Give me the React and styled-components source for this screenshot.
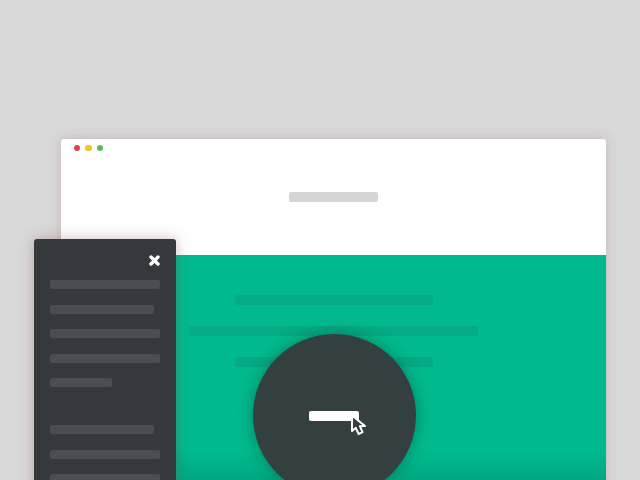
import React from 'react';
import styled, { createGlobalStyle } from 'styled-components';

const GlobalStyle = createGlobalStyle`
  html, body {
    margin: 0;
    padding: 0;
    height: 100%;
    overflow: hidden;
    background: #d9d9d9;
  }
`;

const Page = styled.div`
  position: relative;
  width: 640px;
  height: 480px;
  overflow: hidden;
  padding: 139px 34px 0 61px;
  box-sizing: border-box;
  background: #d9d9d9;
`;

const Window = styled.div`
  position: relative;
  height: 380px;
  border-radius: 3px 3px 0 0;
  background: #fff;
  box-shadow: 0 0 12px rgba(150, 90, 90, 0.28);
`;

const TitleBar = styled.div`
  height: 116px;
  position: relative;
  display: flex;
  align-items: center;
  justify-content: center;
`;

const Dots = styled.div`
  position: absolute;
  top: 5.75px;
  left: 12.75px;
  display: flex;
  gap: 5px;
`;

const Dot = styled.span`
  width: 6.5px;
  height: 6.5px;
  border-radius: 50%;
  background: ${({ color }) => color};
`;

const Heading = styled.div`
  width: 89px;
  height: 10px;
  border-radius: 2px;
  background: #d6d6d6;
`;

const Hero = styled.div`
  height: 264px;
  box-sizing: border-box;
  padding-top: 40px;
  display: flex;
  flex-direction: column;
  align-items: center;
  gap: 21px;
  background: linear-gradient(to bottom, #00ba8d 0, #00ba8d 195px, #00a881 225px, #00a881 100%);
`;

const HeroLine = styled.div`
  width: ${({ width }) => width}px;
  height: 10px;
  border-radius: 2px;
  background: #05ab84;
`;

const Circle = styled.div`
  position: absolute;
  left: 191.5px;
  top: 195px;
  width: 163px;
  height: 163px;
  border-radius: 50%;
  display: flex;
  align-items: center;
  justify-content: center;
  background: #343f40;
  box-shadow: 0 0 16px rgba(0, 60, 45, 0.45);
`;

const CircleBar = styled.div`
  width: 50px;
  height: 10px;
  border-radius: 2px;
  background: #fff;
`;

const Cursor = styled.svg`
  position: absolute;
  left: 96px;
  top: 79px;
  width: 20px;
  height: 24px;
`;

const Sidebar = styled.div`
  position: absolute;
  left: 34px;
  top: 239px;
  width: 142px;
  height: 260px;
  box-sizing: border-box;
  padding: 16px 16px 0;
  border-radius: 3px 3px 0 0;
  background: #35383c;
  box-shadow: 0 0 14px rgba(130, 60, 60, 0.35);
`;

const CloseRow = styled.div`
  display: flex;
  justify-content: flex-end;
  height: 25px;
  line-height: 0;
`;

const CloseIcon = styled.svg`
  width: 11px;
  height: 11px;
`;

const MenuGroup = styled.div`
  display: flex;
  flex-direction: column;
  gap: 15.5px;
  margin-bottom: ${({ $after }) => $after || 0}px;
`;

const MenuLine = styled.div`
  width: ${({ width }) => width}px;
  height: 9px;
  border-radius: 2px;
  background: #4a4d52;
`;

const App = () => {
  return (
    <>
      <GlobalStyle />
      <Page>
        <Window>
          <TitleBar>
            <Dots>
              <Dot color="#e0404a" />
              <Dot color="#efc41c" />
              <Dot color="#5cb85c" />
            </Dots>
            <Heading />
          </TitleBar>
          <Hero>
            <HeroLine width={198} />
            <HeroLine width={289} />
            <HeroLine width={198} />
          </Hero>
          <Circle>
            <CircleBar />
            <Cursor viewBox="0 0 20 24">
              <path
                d="M3 2.5 L3 18 L6.8 14.8 L9.6 21 L13.6 19.2 L10.8 13.2 L16 13 Z"
                fill="#343f40"
                stroke="#fff"
                strokeWidth="2"
                strokeLinejoin="round"
              />
            </Cursor>
          </Circle>
        </Window>
        <Sidebar>
          <CloseRow>
            <CloseIcon viewBox="0 0 11 11">
              <path d="M2 2 L9 9 M9 2 L2 9" stroke="#fff" strokeWidth="3.4" strokeLinecap="round" />
            </CloseIcon>
          </CloseRow>
          <MenuGroup $after={38}>
            <MenuLine width={110} />
            <MenuLine width={104} />
            <MenuLine width={110} />
            <MenuLine width={110} />
            <MenuLine width={62} />
          </MenuGroup>
          <MenuGroup>
            <MenuLine width={104} />
            <MenuLine width={110} />
            <MenuLine width={110} />
          </MenuGroup>
        </Sidebar>
      </Page>
    </>
  );
};

export default App;
